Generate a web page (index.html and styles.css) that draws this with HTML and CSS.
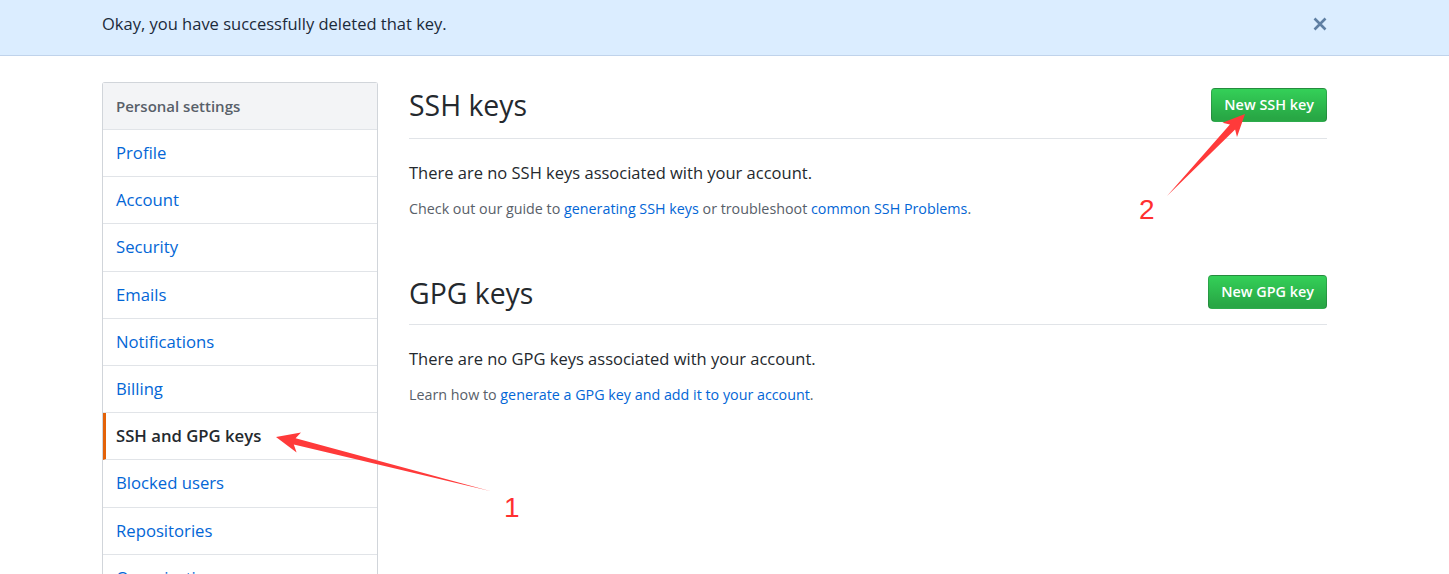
FILE: index.html
```html
<!DOCTYPE html>
<html lang="en">
<head>
<meta charset="utf-8">
<title>SSH and GPG keys</title>
<link rel="stylesheet" href="styles.css">
</head>
<body>
<div class="flash">
  <div class="container flash-inner">
    <span class="flash-text">Okay, you have successfully deleted that key.</span>
    <button class="flash-close" aria-label="Dismiss">
      <svg width="14" height="14" viewBox="0 0 14 14"><path d="M1.5 1.5L12.5 12.5M12.5 1.5L1.5 12.5" stroke="currentColor" stroke-width="2.6" fill="none"/></svg>
    </button>
  </div>
</div>

<div class="container layout">
  <nav class="menu">
    <div class="menu-heading">Personal settings</div>
    <a class="menu-item" href="#">Profile</a>
    <a class="menu-item" href="#">Account</a>
    <a class="menu-item" href="#">Security</a>
    <a class="menu-item" href="#">Emails</a>
    <a class="menu-item" href="#">Notifications</a>
    <a class="menu-item" href="#">Billing</a>
    <a class="menu-item selected" href="#">SSH and GPG keys</a>
    <a class="menu-item" href="#">Blocked users</a>
    <a class="menu-item" href="#">Repositories</a>
    <a class="menu-item" href="#">Organizations</a>
  </nav>

  <main class="content">
    <section class="keys-section ssh">
      <div class="subhead">
        <h2 class="subhead-title">SSH keys</h2>
        <a class="btn btn-primary" href="#">New SSH key</a>
      </div>
      <p class="blank">There are no SSH keys associated with your account.</p>
      <p class="note">Check out our guide to <a href="#">generating SSH keys</a> or troubleshoot <a href="#">common SSH Problems</a>.</p>
    </section>

    <section class="keys-section gpg">
      <div class="subhead">
        <h2 class="subhead-title">GPG keys</h2>
        <a class="btn btn-primary" href="#">New GPG key</a>
      </div>
      <p class="blank">There are no GPG keys associated with your account.</p>
      <p class="note">Learn how to <a href="#">generate a GPG key and add it to your account</a>.</p>
    </section>
  </main>
</div>

<svg class="annotations" width="1449" height="574" viewBox="0 0 1449 574" aria-hidden="true">
  <polygon fill="#ff3a3a" points="276,437 301,432.5 295.6,438.2 490,491 293.8,444.6 296.6,452.5"/>
  <polygon fill="#ff3a3a" points="1245,114 1237,137 1235.1,129.6 1167,196 1229.9,124.4 1222.4,122.8"/>
</svg>
<span class="label label-1">1</span>
<span class="label label-2">2</span>
</body>
</html>
```

FILE: styles.css
```css
* { box-sizing: border-box; }

html, body {
  margin: 0;
  padding: 0;
  background: #fff;
}

body {
  font-family: "Open Sans", "Noto Sans", "Liberation Sans", sans-serif;
  color: #24292e;
  padding-right: 20px;
  height: 574px;
  overflow: hidden;
  position: relative;
}

a { color: #0366d6; text-decoration: none; }

.container {
  width: 1225px;
  margin: 0 auto;
}

/* Flash */
.flash {
  background: #dbedff;
  border-bottom: 1px solid #c0d3eb;
  height: 56px;
  margin-right: -20px;
  padding-right: 20px;
}
.flash-inner {
  display: flex;
  align-items: center;
  justify-content: space-between;
  height: 55px;
  padding-bottom: 8px;
}
.flash-text {
  font-size: 16.5px;
  color: #1b2a3a;
}
.flash-close {
  border: 0;
  background: transparent;
  padding: 0;
  margin: 0;
  color: #5f7fa3;
  display: flex;
  cursor: pointer;
}

/* Layout */
.layout {
  display: flex;
  align-items: flex-start;
  gap: 31px;
  margin-top: 26px;
  height: 492px;
  overflow: hidden;
}

.menu {
  width: 276px;
  flex: none;
  border: 1px solid #d1d5da;
  border-bottom: 0;
  border-radius: 3px 3px 0 0;
}
.menu-heading {
  background: #f3f4f6;
  color: #586069;
  font-weight: 600;
  font-size: 15px;
  height: 47px;
  line-height: 46px;
  padding-left: 13px;
  border-bottom: 1px solid #e1e4e8;
}
.menu-item {
  display: block;
  height: 47.2px;
  line-height: 46px;
  padding-left: 13px;
  font-size: 16.7px;
  border-bottom: 1px solid #e1e4e8;
  color: #0366d6;
}
.menu-item.selected {
  color: #24292e;
  font-weight: 600;
  border-left: 3px solid #e36209;
  padding-left: 10px;
}

/* Content */
.content {
  flex: 1;
  min-width: 0;
}
.subhead {
  display: flex;
  align-items: center;
  justify-content: space-between;
  border-bottom: 1px solid #e1e4e8;
}
.ssh .subhead {
  padding-top: 5px;
  padding-bottom: 15px;
}
.gpg {
  margin-top: 56px;
}
.gpg .subhead {
  padding-top: 0;
  padding-bottom: 13px;
}
.gpg .btn {
  margin-top: -3px;
}
.subhead-title {
  margin: 0;
  font-size: 28.4px;
  font-weight: 400;
  line-height: 36px;
  color: #24292e;
}
.btn {
  display: inline-block;
  font-size: 14.4px;
  font-weight: 600;
  height: 34px;
  line-height: 32px;
  padding: 0 12px;
  border-radius: 4px;
  border: 1px solid rgba(27, 31, 35, 0.2);
}
.btn-primary {
  color: #fff;
  background-image: linear-gradient(-180deg, #34d058 0%, #28a745 90%);
  background-color: #28a745;
}
.blank {
  margin: 22px 0 0;
  font-size: 16.5px;
  line-height: 24px;
}
.note {
  margin: 14px 0 0;
  font-size: 14.3px;
  line-height: 20px;
  color: #586069;
}

/* Annotations overlay */
.annotations {
  position: absolute;
  left: 0;
  top: 0;
  pointer-events: none;
}
.label {
  position: absolute;
  color: #ff3030;
  font-family: "Liberation Sans", sans-serif;
  font-size: 28px;
  line-height: 28px;
}
.label-1 { left: 504px; top: 494px; }
.label-2 { left: 1139px; top: 196px; }
```
